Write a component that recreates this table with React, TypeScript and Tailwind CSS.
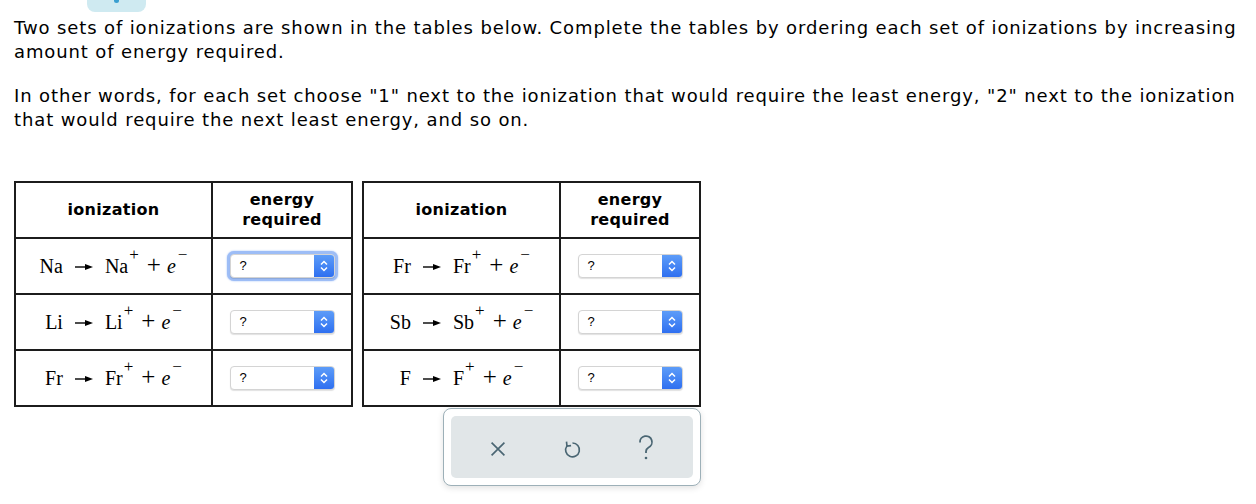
import React from "react";

const Arrow = () => (
  <svg width="18" height="8" viewBox="0 0 18 8" className="mx-[12px] self-center mt-[2px]">
    <line x1="0" y1="4" x2="12" y2="4" stroke="#000" strokeWidth="1.4" />
    <path d="M10 1 L18 4 L10 7 Z" fill="#000" />
  </svg>
);

const Eq = ({ el }: { el: string }) => (
  <div className="flex items-baseline justify-center font-['Liberation_Serif',serif] text-[20px] text-black">
    <span>{el}</span>
    <Arrow />
    <span>{el}</span>
    <span className="relative -top-[13px] text-[17px] ml-[1px]">+</span>
    <span className="ml-[8px] text-[25px] leading-none">+</span>
    <span className="ml-[6px] italic">e</span>
    <span className="relative -top-[13px] text-[17px] ml-[2px]">−</span>
  </div>
);

const Select = ({ focus }: { focus?: boolean }) => (
  <div
    className={
      "rounded-[7px] p-[3px]" +
      (focus ? " bg-[#9dbdf6] shadow-[0_0_2px_#9dbdf6]" : " bg-transparent")
    }
  >
    <div className="flex h-[24px] w-[105px] rounded-[4px] border border-[#d4d4d4] bg-white shadow-[0_1px_1px_rgba(0,0,0,0.12)] overflow-hidden">
      <div className="flex-1 pl-[9px] text-[13px] leading-[22px] font-['Liberation_Sans',sans-serif] text-black">
        ?
      </div>
      <div className="w-[20px] bg-gradient-to-b from-[#5d9cf8] to-[#2f6ff0] flex items-center justify-center">
        <svg width="10" height="14" viewBox="0 0 10 14">
          <path d="M2 5.5 L5 2.5 L8 5.5 M2 8.5 L5 11.5 L8 8.5" fill="none" stroke="#fff" strokeWidth="1.5" />
        </svg>
      </div>
    </div>
  </div>
);

const IonTable = ({ rows }: { rows: string[] }) => (
  <table className="w-[339px] table-fixed border-collapse border-2 border-[#1c1c1c]">
    <thead>
      <tr className="h-[56px]">
        <th className="w-[197px] border-2 border-[#1c1c1c] text-[16px] leading-[20px] font-bold tracking-[0.3px]">
          ionization
        </th>
        <th className="border-2 border-[#1c1c1c] text-[16px] leading-[20px] font-bold tracking-[0.3px]">
          energy
          <br />
          required
        </th>
      </tr>
    </thead>
    <tbody>
      {rows.map((el, i) => (
        <tr key={el + i} className="h-[56px]">
          <td className="border-2 border-[#1c1c1c]">
            <Eq el={el} />
          </td>
          <td className="border-2 border-[#1c1c1c]">
            <div className="flex justify-center">
              <Select focus={i === 0 && rows[0] === "Na"} />
            </div>
          </td>
        </tr>
      ))}
    </tbody>
  </table>
);

export default function App() {
  return (
    <div className="w-[1256px] h-[504px] bg-white text-black font-['DejaVu_Sans',sans-serif] overflow-hidden">
      <div className="h-[12px] pl-[87px]">
        <div className="relative w-[59px] h-[12px] rounded-b-[8px] bg-[#cfeaf1]">
          <div className="absolute left-[27px] top-0 w-[5px] h-[3px] rounded-b-full bg-[#3a9fd0]" />
        </div>
      </div>
      <div className="pl-[14px] pr-[10px]">
        <div className="text-[18px] leading-[24px] tracking-[0.88px]">
          <p className="mt-[4px]">
            Two sets of ionizations are shown in the tables below. Complete the tables by ordering each set of ionizations by increasing
            amount of energy required.
          </p>
          <p className="mt-[20px]">
            In other words, for each set choose "1" next to the ionization that would require the least energy, "2" next to the ionization
            that would require the next least energy, and so on.
          </p>
        </div>
        <div className="mt-[49px] flex gap-[9px] items-start">
          <IonTable rows={["Na", "Li", "Fr"]} />
          <div className="flex flex-col items-end">
            <IonTable rows={["Fr", "Sb", "F"]} />
            <div className="mt-[1px] w-[258px] h-[78px] rounded-[8px] border border-[#9db0b8] bg-white p-[7px] shadow-[0_2px_6px_rgba(0,0,0,0.12)]">
              <div className="h-full rounded-[5px] bg-[#e1e6e8] flex items-center justify-around px-[10px]">
                <svg width="22" height="22" viewBox="0 0 24 24" className="mt-[3px]">
                  <path d="M5 5 L19 19 M19 5 L5 19" stroke="#4a6673" strokeWidth="1.8" fill="none" />
                </svg>
                <svg width="22" height="24" viewBox="0 0 24 26" className="mt-[3px]">
                  <path d="M12.5 6.5 A7.5 7.5 0 1 1 6.5 9.6" stroke="#4a6673" strokeWidth="1.8" fill="none" />
                  <path d="M6 5 L6.5 9.8 L11 9.3" stroke="#4a6673" strokeWidth="1.8" fill="none" />
                </svg>
                <svg width="22" height="28" viewBox="0 0 22 28" className="mt-[2px]">
                  <path d="M5 8.5 A6 6 0 1 1 13.5 13.5 C11.8 14.5 11 15.5 11 17.5 V19" stroke="#4a6673" strokeWidth="1.8" fill="none" />
                  <circle cx="11" cy="24" r="1.3" fill="#4a6673" />
                </svg>
              </div>
            </div>
          </div>
        </div>
      </div>
    </div>
  );
}
